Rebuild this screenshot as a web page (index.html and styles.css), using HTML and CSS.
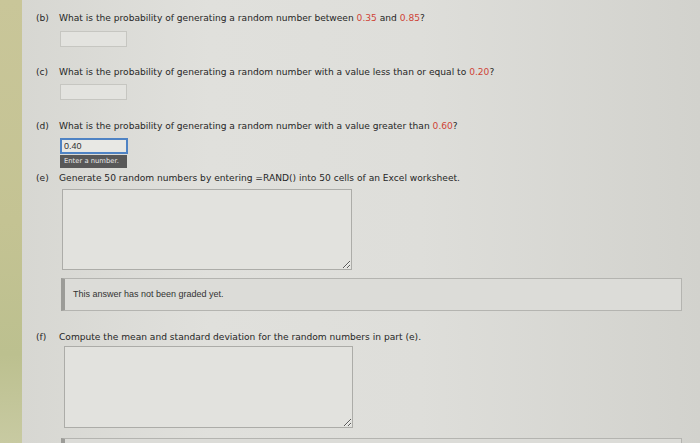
FILE: index.html
```html
<!DOCTYPE html>
<html>
<head>
<meta charset="utf-8">
<link rel="stylesheet" href="styles.css">
</head>
<body>
<div class="screen">
  <div class="strip"></div>
  <div class="main">
    <div class="qline q-b"><span class="lbl">(b)</span><span>What is the probability of generating a random number between <span class="red">0.35</span> and <span class="red">0.85</span>?</span></div>
    <input class="num ans-b" type="text" value="">

    <div class="qline q-c"><span class="lbl">(c)</span><span>What is the probability of generating a random number with a value less than or equal to <span class="red">0.20</span>?</span></div>
    <input class="num ans-c" type="text" value="">

    <div class="qline q-d"><span class="lbl">(d)</span><span>What is the probability of generating a random number with a value greater than <span class="red">0.60</span>?</span></div>
    <input class="num focus ans-d" type="text" value="0.40">
    <div class="tip">Enter a number.</div>

    <div class="qline q-e"><span class="lbl">(e)</span><span>Generate 50 random numbers by entering =RAND() into 50 cells of an Excel worksheet.</span></div>
    <textarea class="area area-e"></textarea>
    <div class="graded">This answer has not been graded yet.</div>

    <div class="qline q-f"><span class="lbl">(f)</span><span>Compute the mean and standard deviation for the random numbers in part (e).</span></div>
    <textarea class="area area-f"></textarea>
    <div class="graded next"></div>
  </div>
</div>
</body>
</html>
```

FILE: styles.css
```css
html, body {
  margin: 0;
  padding: 0;
  width: 700px;
  height: 443px;
  overflow: hidden;
}
.screen {
  display: flex;
  width: 700px;
  height: 443px;
  overflow: hidden;
  background: linear-gradient(90deg, #d6d6d1 0%, #e0e0dc 30%, #dededa 60%, #d2d2cd 100%);
}
.strip {
  width: 22px;
  flex: none;
  background: linear-gradient(180deg, #c9c699 0%, #c4c393 50%, #bcc08f 80%, #c8caa2 100%);
}
.main {
  flex: 1;
  padding-top: 12px;
  padding-left: 14px;
  display: flex;
  flex-direction: column;
  align-items: flex-start;
  font-family: "DejaVu Sans", Verdana, sans-serif;
  font-size: 9.1px;
  color: #262626;
}
.main > * {
  flex: none;
}
.qline {
  display: flex;
  line-height: 12px;
  height: 12px;
  white-space: nowrap;
}
.lbl {
  width: 23px;
  flex: none;
}
.red {
  color: #cf4336;
}
.num {
  box-sizing: border-box;
  width: 67px;
  height: 16px;
  margin: 0 0 0 24px;
  padding: 0 3px;
  border: 1px solid #c6c6c1;
  background: #e3e3df;
  font-family: "Liberation Sans", Arial, sans-serif;
  font-size: 9px;
  color: #333;
  outline: none;
}
.ans-b { margin-top: 7px; }
.q-c { margin-top: 19px; }
.ans-c { margin-top: 6px; }
.q-d { margin-top: 20px; }
.ans-d { margin-top: 6px; }
.focus {
  border: 2px solid #4f83c4;
  width: 68px;
  background: #e8e8e4;
  padding-left: 2px;
}
.tip {
  margin: 1px 0 0 24px;
  width: 67px;
  height: 13px;
  box-sizing: border-box;
  background: #585858;
  color: #e8e8e8;
  font-family: "DejaVu Sans", Verdana, sans-serif;
  font-size: 6.8px;
  line-height: 13px;
  padding-left: 4px;
}
.q-e { margin-top: 4px; }
.area {
  box-sizing: border-box;
  display: block;
  border: 1px solid #acaca8;
  background: #e2e2de;
  outline: none;
  padding: 0;
  resize: both;
}
.area-e {
  margin: 5px 0 0 26px;
  width: 290px;
  height: 81px;
}
.graded {
  box-sizing: border-box;
  margin: 8px 0 0 25px;
  width: 621px;
  height: 33px;
  border: 1px solid #b4b4b0;
  border-left: 4px solid #9c9c98;
  background: #dcdcd8;
  font-family: "Liberation Sans", Arial, sans-serif;
  font-size: 9px;
  color: #333;
  line-height: 31px;
  padding-left: 8px;
}
.q-f { margin-top: 20px; }
.area-f {
  margin: 3px 0 0 28px;
  width: 289px;
  height: 82px;
}
.next {
  margin-top: 10px;
  height: 20px;
}
```
